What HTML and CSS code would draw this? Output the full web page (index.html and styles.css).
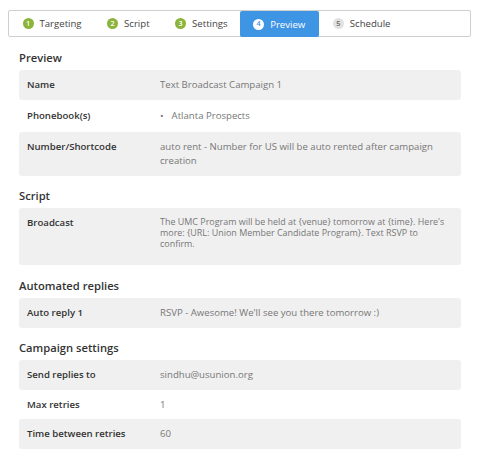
FILE: index.html
```html
<!DOCTYPE html>
<html lang="en">
<head>
<meta charset="utf-8">
<title>Campaign preview</title>
<link rel="stylesheet" href="styles.css">
</head>
<body>
<div class="page">
  <nav class="steps">
    <div class="step done"><span class="num">1</span>Targeting</div>
    <div class="step done"><span class="num">2</span>Script</div>
    <div class="step done"><span class="num">3</span>Settings</div>
    <div class="step active"><span class="num">4</span>Preview</div>
    <div class="step todo"><span class="num">5</span>Schedule</div>
  </nav>

  <div class="content">
    <section class="group">
      <h2>Preview</h2>
      <div class="rows">
        <div class="row"><div class="label">Name</div><div class="value">Text Broadcast Campaign 1</div></div>
        <div class="row list-row"><div class="label">Phonebook(s)</div><div class="value"><ul class="bullets"><li>Atlanta Prospects</li></ul></div></div>
        <div class="row"><div class="label">Number/Shortcode</div><div class="value">auto rent - Number for US will be auto rented after campaign creation</div></div>
      </div>
    </section>

    <section class="group">
      <h2>Script</h2>
      <div class="rows">
        <div class="row msg-row"><div class="label">Broadcast</div><div class="value msg">The UMC Program will be held at {venue} tomorrow at {time}. Here's more: {URL: Union Member Candidate Program}. Text RSVP to confirm.</div></div>
      </div>
    </section>

    <section class="group">
      <h2>Automated replies</h2>
      <div class="rows">
        <div class="row"><div class="label">Auto reply 1</div><div class="value">RSVP - Awesome! We'll see you there tomorrow :)</div></div>
      </div>
    </section>

    <section class="group">
      <h2>Campaign settings</h2>
      <div class="rows">
        <div class="row"><div class="label">Send replies to</div><div class="value">sindhu@usunion.org</div></div>
        <div class="row"><div class="label">Max retries</div><div class="value">1</div></div>
        <div class="row"><div class="label">Time between retries</div><div class="value">60</div></div>
      </div>
    </section>
  </div>
</div>
</body>
</html>
```

FILE: styles.css
```css
* { box-sizing: border-box; }

html, body {
  margin: 0;
  padding: 0;
  background: #ffffff;
}

body {
  font-family: "Open Sans", "Liberation Sans", sans-serif;
  font-size: 9.6px;
  color: #333333;
}

.page {
  padding: 10px 9px 0 8px;
}

/* Step tabs */
.steps {
  display: flex;
  border: 1px solid #cfcfcf;
  border-radius: 2px;
  height: 27px;
}

.step {
  display: flex;
  align-items: center;
  gap: 6px;
  padding: 0 12px 0 13.5px;
  color: #444444;
  font-size: 9.6px;
  line-height: 13px;
}

.num {
  display: inline-flex;
  align-items: center;
  justify-content: center;
  width: 11px;
  height: 11px;
  border-radius: 50%;
  font-size: 7.2px;
  font-weight: 600;
  line-height: 1;
}

.step.done .num {
  background: #8cb43a;
  color: #ffffff;
}

.step.active {
  background: #3e95e3;
  color: #ffffff;
  border-radius: 2px;
  margin-bottom: -1px;
  padding-right: 14px;
}

.step.active .num {
  background: #ffffff;
  color: #3e95e3;
}

.step.todo .num {
  background: #e1e1e1;
  color: #666666;
}

/* Content */
.content {
  padding: 0 10px 0 11px;
}

.group h2 {
  margin: 13.5px 0 6px;
  font-size: 11.2px;
  line-height: 13px;
  font-weight: 600;
  color: #333333;
}

.group:first-child h2 {
  margin-top: 14px;
}

.rows {
  display: flex;
  flex-direction: column;
}

.row {
  display: grid;
  grid-template-columns: 133px 1fr;
  padding: 8px 8px;
  border-radius: 3px;
  line-height: 13.7px;
}

.row:nth-child(odd) {
  background: #f0f0f0;
}

.label {
  font-weight: 600;
  color: #333333;
}

.value {
  color: #777777;
}

.list-row {
  padding-top: 9.5px;
  padding-bottom: 9.5px;
}

.bullets {
  list-style: none;
  margin: 0;
  padding: 0;
}

.bullets li {
  display: flex;
  gap: 8px;
}

.bullets li::before {
  content: "\2022";
  color: #777777;
}

.msg-row {
  padding-bottom: 15.6px;
}

.msg {
  font-size: 8.95px;
  line-height: 10.8px;
  padding-top: 1px;
}
```
